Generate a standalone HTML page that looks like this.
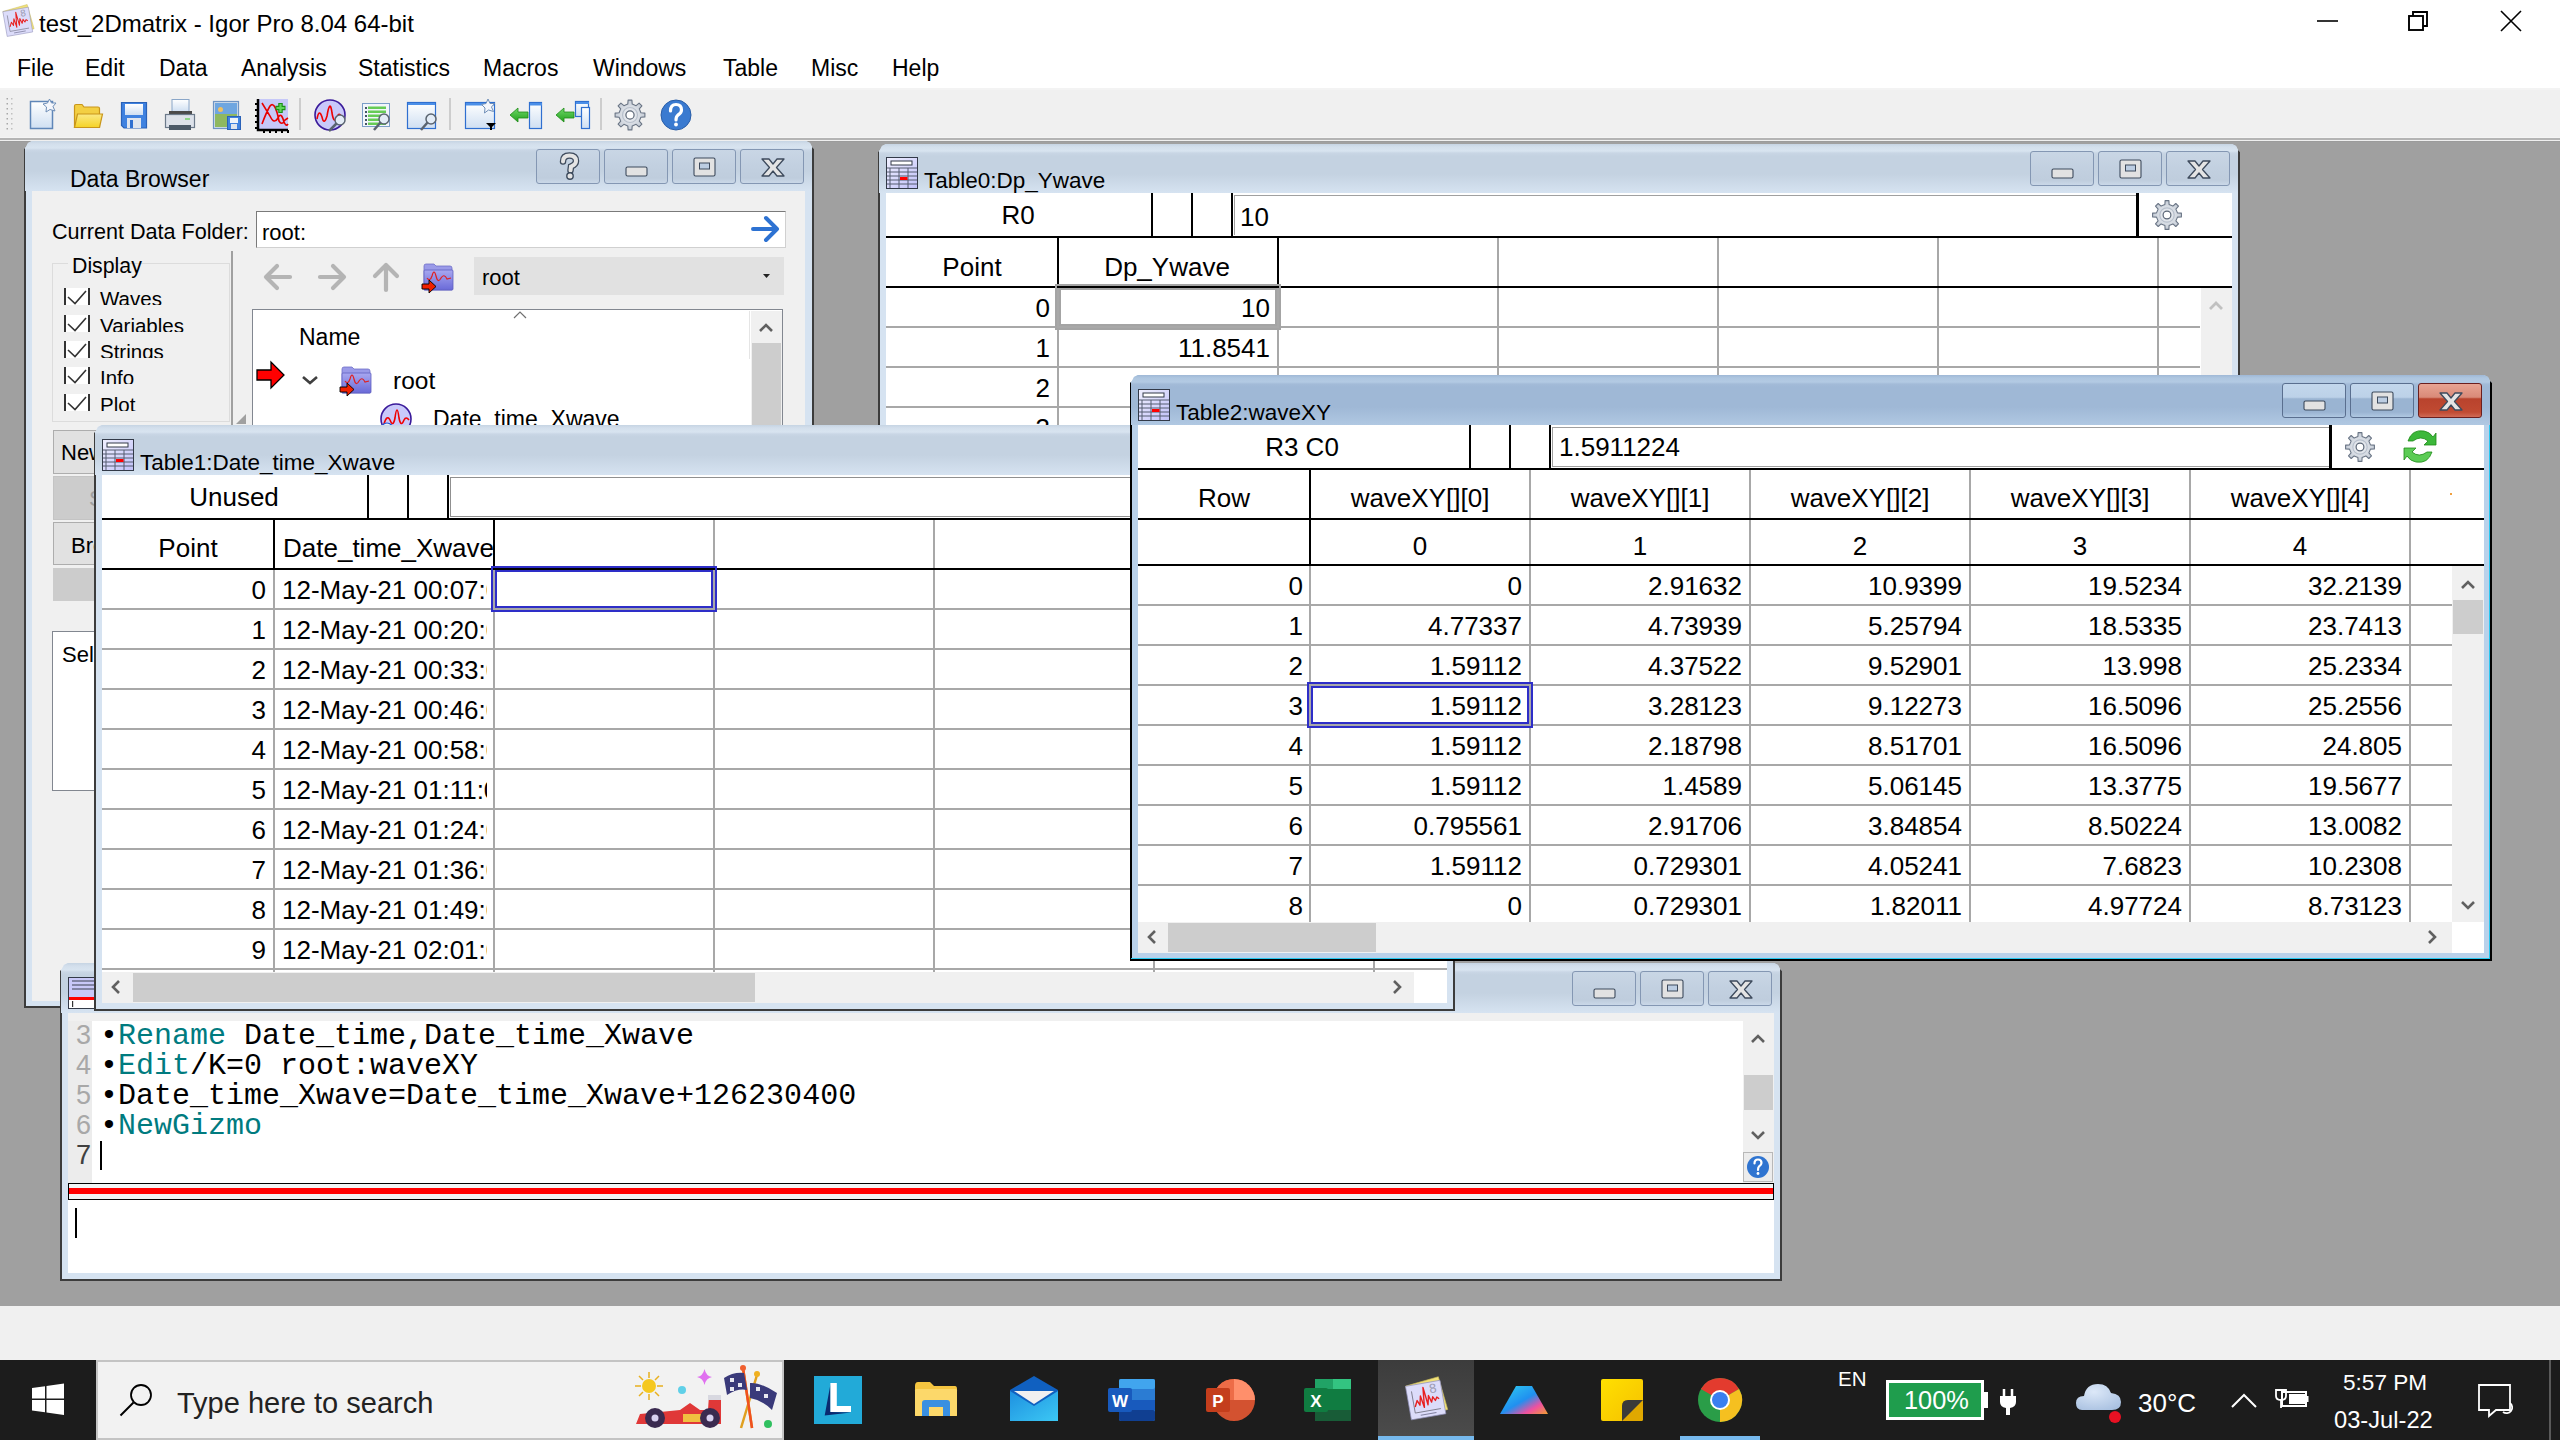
<!DOCTYPE html><html><head><meta charset="utf-8"><title>Igor Pro</title><style>
*{margin:0;padding:0;box-sizing:border-box}
html,body{width:2560px;height:1440px;overflow:hidden;background:#a0a0a0;font-family:"Liberation Sans",sans-serif;color:#000}
div,span,svg{position:absolute}
svg{overflow:visible}
.t{white-space:nowrap;line-height:1}
</style></head><body>
<div style="left:0px;top:0px;width:2560px;height:88px;background:#fff"></div>
<div style="left:0px;top:88px;width:2560px;height:2px;background:#f3f3f3"></div>
<div style="left:0px;top:90px;width:2560px;height:48px;background:#f0f0f0"></div>
<div style="left:0px;top:138px;width:2560px;height:2px;background:#b4b4b4"></div>
<div style="left:0px;top:137px;width:2560px;height:1px;background:#f4f4f4"></div>
<div style="left:0px;top:140px;width:2560px;height:1px;background:#efefef"></div>
<div style="left:0px;top:141px;width:2560px;height:1px;background:#9b9b9b"></div>
<div style="left:0px;top:1306px;width:2560px;height:54px;background:#f0f0f0"></div>
<div style="left:0px;top:1360px;width:2560px;height:80px;background:#1c1c1c"></div>
<span class="t" style="left:39px;top:12px;font-size:24px">test_2Dmatrix - Igor Pro 8.04 64-bit</span>
<span class="t" style="left:17px;top:57px;font-size:23px">File</span>
<span class="t" style="left:85px;top:57px;font-size:23px">Edit</span>
<span class="t" style="left:159px;top:57px;font-size:23px">Data</span>
<span class="t" style="left:241px;top:57px;font-size:23px">Analysis</span>
<span class="t" style="left:358px;top:57px;font-size:23px">Statistics</span>
<span class="t" style="left:483px;top:57px;font-size:23px">Macros</span>
<span class="t" style="left:593px;top:57px;font-size:23px">Windows</span>
<span class="t" style="left:723px;top:57px;font-size:23px">Table</span>
<span class="t" style="left:811px;top:57px;font-size:23px">Misc</span>
<span class="t" style="left:892px;top:57px;font-size:23px">Help</span>
<svg style="left:0;top:0" width="720" height="140" viewBox="0 0 720 140"><rect x="6.5" y="98" width="1.5" height="1.5" fill="#a8a8a8"/><rect x="11" y="98" width="1.5" height="1.5" fill="#c0c0c0"/><rect x="6.5" y="103" width="1.5" height="1.5" fill="#a8a8a8"/><rect x="11" y="103" width="1.5" height="1.5" fill="#c0c0c0"/><rect x="6.5" y="108" width="1.5" height="1.5" fill="#a8a8a8"/><rect x="11" y="108" width="1.5" height="1.5" fill="#c0c0c0"/><rect x="6.5" y="113" width="1.5" height="1.5" fill="#a8a8a8"/><rect x="11" y="113" width="1.5" height="1.5" fill="#c0c0c0"/><rect x="6.5" y="118" width="1.5" height="1.5" fill="#a8a8a8"/><rect x="11" y="118" width="1.5" height="1.5" fill="#c0c0c0"/><rect x="6.5" y="123" width="1.5" height="1.5" fill="#a8a8a8"/><rect x="11" y="123" width="1.5" height="1.5" fill="#c0c0c0"/><rect x="6.5" y="128" width="1.5" height="1.5" fill="#a8a8a8"/><rect x="11" y="128" width="1.5" height="1.5" fill="#c0c0c0"/><defs><linearGradient id="gw" x1="0" y1="0" x2="0" y2="1"><stop offset="0" stop-color="#ffffff"/><stop offset="1" stop-color="#cfdff2"/></linearGradient><linearGradient id="gy" x1="0" y1="0" x2="0" y2="1"><stop offset="0" stop-color="#fbe985"/><stop offset="1" stop-color="#f5d326"/></linearGradient><linearGradient id="gb" x1="0" y1="0" x2="0" y2="1"><stop offset="0" stop-color="#4b8fe8"/><stop offset="1" stop-color="#2f6fd0"/></linearGradient><linearGradient id="gg" x1="0" y1="0" x2="0" y2="1"><stop offset="0" stop-color="#6fd86a"/><stop offset="1" stop-color="#22a01c"/></linearGradient><radialGradient id="gear" cx="0.5" cy="0.5" r="0.5"><stop offset="0" stop-color="#f4f6f9"/><stop offset="1" stop-color="#c5ccd6"/></radialGradient></defs><rect x="30.5" y="101.5" width="22" height="27" fill="url(#gw)" stroke="#5f86b8" stroke-width="1.5"/><polygon points="49.5,99 51.5,103 56,103 53,106.5 55,111 50,109.5 46,112 46.5,107 43,104 47.5,103" fill="#f4f6fb" stroke="#6f8fb8" stroke-width="1"/><path d="M74.5,127.5 L74.5,106 Q74.5,104.5 76,104.5 L82,104.5 L84,107 L98,107 Q99.5,107 99.5,108.5 L99.5,127.5 Z" fill="#f3cf43" stroke="#c9961a" stroke-width="1.2"/><path d="M74.5,127.5 L77.5,114 L102.5,114 L99.5,127.5 Z" fill="url(#gy)" stroke="#c9961a" stroke-width="1.2"/><path d="M121.5,102.5 L146.5,102.5 L146.5,128 L124,128 L121.5,125.5 Z" fill="#3f82e0" stroke="#2a62b8" stroke-width="1.2"/><rect x="125" y="104" width="18" height="11" fill="url(#gw)"/><rect x="127" y="118" width="14" height="10" fill="#dfe5ee"/><rect x="130" y="120" width="3" height="8" fill="#2f6fd0"/><rect x="172" y="99.5" width="17" height="12" fill="url(#gw)" stroke="#8aa6c8" stroke-width="1"/><rect x="169" y="111" width="23" height="5" fill="#4a4a4a"/><rect x="165.5" y="114.5" width="29" height="13" fill="#dde2ea" stroke="#6c7a8a" stroke-width="1.2"/><rect x="185" y="118" width="5" height="2" fill="#8ed68a"/><rect x="169" y="125" width="22" height="5" fill="#4c5a68"/><rect x="213.5" y="101.5" width="25" height="27" fill="#cfdcec" stroke="#6f94c4" stroke-width="1.2"/><rect x="215" y="103" width="22" height="11" fill="#6fa6e0"/><rect x="215" y="114" width="22" height="13" fill="#8fb860"/><circle cx="220.5" cy="109.5" r="2.5" fill="#f0c060"/><rect x="227.5" y="116.5" width="13" height="13" fill="#3f82e0" stroke="#2a62b8" stroke-width="1"/><rect x="230" y="118" width="8" height="5" fill="#eef3fa"/><rect x="231" y="124" width="6" height="5" fill="#dfe5ee"/><rect x="258" y="99" width="30" height="30" fill="#c6c8f8"/><path d="M258,99 L258,130 L288,130" fill="none" stroke="#000" stroke-width="2.5"/><rect x="255" y="103" width="3" height="2" fill="#000"/><rect x="255" y="109" width="3" height="2" fill="#000"/><rect x="255" y="115" width="3" height="2" fill="#000"/><rect x="255" y="121" width="3" height="2" fill="#000"/><rect x="255" y="127" width="3" height="2" fill="#000"/><rect x="263" y="130" width="2" height="3" fill="#000"/><rect x="269" y="130" width="2" height="3" fill="#000"/><rect x="275" y="130" width="2" height="3" fill="#000"/><rect x="281" y="130" width="2" height="3" fill="#000"/><rect x="287" y="130" width="2" height="3" fill="#000"/><path d="M262,103 L270,116 Q274,125 278,118 Q281,111 284,122 Q286,127 288,124 M262,124 Q266,113 270,106 Q275,100 279,121 Q282,126 285,120 L288,118" fill="none" stroke="#e80000" stroke-width="1.6"/><path d="M280.5,103 L280.5,113 M275.5,108 L285.5,108" stroke="#1a8f16" stroke-width="4.5"/><path d="M280.5,104 L280.5,112 M276.5,108 L284.5,108" stroke="#5fd65a" stroke-width="2.2"/><rect x="299" y="98" width="2" height="32" fill="#cdcdcd"/><rect x="449" y="98" width="2" height="32" fill="#cdcdcd"/><rect x="600" y="98" width="2" height="32" fill="#cdcdcd"/><circle cx="330" cy="115" r="15" fill="#c9c9fa" stroke="#3a1a9a" stroke-width="1.6"/><path d="M317,119 Q319,108 322,117 Q324,126 327,116 Q330,98 332,113 Q334,125 337,117 Q339,112 341,116" fill="none" stroke="#f00000" stroke-width="1.6"/><circle cx="340" cy="120" r="5" fill="#e3ecf6" stroke="#5a6470" stroke-width="1.5"/><path d="M336.5,123.5 L329,131" stroke="#5a6470" stroke-width="2.5"/><rect x="362.5" y="103.5" width="27" height="23" fill="#f2f6fb" stroke="#7b9ec8" stroke-width="1"/><rect x="365" y="107" width="2" height="2" fill="#456"/><rect x="368" y="106.5" width="18" height="2.5" fill="#66cc55"/><rect x="365" y="111" width="2" height="2" fill="#456"/><rect x="368" y="110.5" width="18" height="2.5" fill="#66cc55"/><rect x="365" y="115" width="2" height="2" fill="#456"/><rect x="368" y="114.5" width="18" height="2.5" fill="#66cc55"/><rect x="365" y="119" width="2" height="2" fill="#456"/><rect x="368" y="118.5" width="18" height="2.5" fill="#66cc55"/><rect x="365" y="123" width="2" height="2" fill="#456"/><rect x="368" y="122.5" width="18" height="2.5" fill="#66cc55"/><circle cx="384" cy="119" r="5" fill="#e3ecf6" stroke="#5a6470" stroke-width="1.5"/><path d="M380.5,122.5 L374,130" stroke="#5a6470" stroke-width="2.5"/><rect x="407.5" y="102.5" width="28" height="26" fill="url(#gw)" stroke="#2f6fd0" stroke-width="1.2"/><rect x="408" y="103" width="27" height="2" fill="#4b8fe8"/><circle cx="431" cy="119" r="5" fill="#e3ecf6" stroke="#5a6470" stroke-width="1.5"/><path d="M427.5,122.5 L421,130" stroke="#5a6470" stroke-width="2.5"/><rect x="465.5" y="102.5" width="29" height="26" fill="url(#gw)" stroke="#2f6fd0" stroke-width="1.2"/><rect x="466" y="103" width="28" height="2.5" fill="#4b8fe8"/><polygon points="488,99 490,103.5 494.5,103.5 491.5,107 493.5,111.5 488.5,110 484.5,113 485,108 481.5,104.5 486,103.5" fill="#f4f6fb" stroke="#6f8fb8" stroke-width="1"/><path d="M486,123 L496,123 L491,128 Z" fill="#000"/><rect x="490" y="126" width="2" height="4" fill="#000"/><path d="M510,115 L518,108 L518,112 L528,112 L528,118 L518,118 L518,122 Z" fill="url(#gg)" stroke="#1e8a18" stroke-width="0.8"/><rect x="529.5" y="102.5" width="12" height="26" fill="url(#gw)" stroke="#2f6fd0" stroke-width="1.2"/><rect x="530" y="103" width="12" height="2.5" fill="#4b8fe8"/><path d="M556,115 L564,108 L564,112 L574,112 L574,118 L564,118 L564,122 Z" fill="url(#gg)" stroke="#1e8a18" stroke-width="0.8"/><rect x="575.5" y="101.5" width="13" height="15" fill="url(#gw)" stroke="#2f6fd0" stroke-width="1.2"/><rect x="576" y="102" width="13" height="2" fill="#4b8fe8"/><rect x="581.5" y="107.5" width="8" height="21" fill="url(#gw)" stroke="#2f6fd0" stroke-width="1.2"/><path d="M640.9,112.8 L644.9,113.1 L644.9,116.9 L640.9,117.2 L639.3,121.1 L641.9,124.1 L639.1,126.9 L636.1,124.3 L632.2,125.9 L631.9,129.9 L628.1,129.9 L627.8,125.9 L623.9,124.3 L620.9,126.9 L618.1,124.1 L620.7,121.1 L619.1,117.2 L615.1,116.9 L615.1,113.1 L619.1,112.8 L620.7,108.9 L618.1,105.9 L620.9,103.1 L623.9,105.7 L627.8,104.1 L628.1,100.1 L631.9,100.1 L632.2,104.1 L636.1,105.7 L639.1,103.1 L641.9,105.9 L639.3,108.9 Z" fill="url(#gear)" stroke="#6a7585" stroke-width="1.1" stroke-linejoin="round"/><circle cx="630" cy="115" r="7.5" fill="none" stroke="#b8c0cc" stroke-width="1.2"/><circle cx="630" cy="115" r="4.1" fill="#fff" stroke="#5a6575" stroke-width="1.2"/><circle cx="676" cy="115" r="15" fill="#3a7ad0" stroke="#2a5ea8" stroke-width="1"/><path d="M670.5,111 Q670.5,104.5 676,104.5 Q681.5,104.5 681.5,110 Q681.5,113 678,115 Q676,116.5 676,120" fill="none" stroke="#fff" stroke-width="3.2" stroke-linecap="round"/><circle cx="676" cy="124.5" r="1.9" fill="#fff"/></svg>
<svg style="left:0;top:0" width="40" height="40"><g transform="translate(18,21) scale(0.74) rotate(-10)"><rect x="-16" y="-18" width="34" height="34" fill="#f2e27a" stroke="#c8b858" stroke-width="0.6" transform="rotate(-6)"/><rect x="-18" y="-16" width="35" height="34" fill="#dcdcfa" stroke="#9090b8" stroke-width="0.7"/><path d="M-13,-10 V12 H13" fill="none" stroke="#707080" stroke-width="0.8"/><path d="M-12,6 L-9,0 L-7,5 L-5,-4 L-3,8 L-1,-12 L1,6 L3,-3 L5,4 L7,-1 L9,3 L11,0 L13,2" fill="none" stroke="#e82020" stroke-width="1.4" stroke-linejoin="round"/><text x="5" y="-5" font-size="13" fill="#9a9ab0" font-family="Liberation Sans">8</text><path d="M-8,15 H8" stroke="#8080a0" stroke-width="1"/></g></svg>
<svg style="left:0;top:0" width="2560" height="44"><path d="M2317,21 H2338" stroke="#000" stroke-width="1.6"/><rect x="2409" y="16" width="14" height="14" fill="none" stroke="#000" stroke-width="1.9"/><path d="M2413,16 V12 H2427 V26 H2423" fill="none" stroke="#000" stroke-width="1.9"/><path d="M2501,11 L2521,31 M2521,11 L2501,31" stroke="#000" stroke-width="1.6"/></svg>
<div style="left:24px;top:141px;width:790px;height:867px;background:#d6e3f1;border-left:1px solid #3c3c3c;border-right:2px solid #3c3c3c;border-bottom:2px solid #3c3c3c;clip-path:polygon(8px 0,calc(100% - 8px) 0,calc(100% - 4px) 2px,calc(100% - 2px) 6px,100% 8px,100% 100%,0 100%,0 8px,2px 6px,4px 2px);overflow:hidden"><div style="left:0;top:0;right:0;height:50px;background:linear-gradient(to bottom,#c6d4e3 0px,#d3dfec 3px,#d8e4f0 7px,#c9d6e5 9px,#c4d2e1 12px,#c4d2e1 30px,#d6e3f1 100%)"></div><div style="left:0;top:50px;width:1px;bottom:0;background:#3c3c3c"></div></div><span class="t" style="left:70px;top:168px;font-size:23px;">Data Browser</span><div style="left:536px;top:149px;width:64px;height:35px;background:linear-gradient(to bottom,#c9d6e5 0%,#c2d0e0 50%,#bfcddd 85%,#cad8e8 100%);border:1px solid #8497b3;border-radius:3px"><svg style="left:0;top:0" width="64" height="35"><path d="M26.0,11.5 Q26.0,5.5 32.5,5.5 Q39.0,5.5 39.0,11.0 Q39.0,14.5 34.0,16.5 L33.5,20.5" fill="none" stroke="#3d4a5c" stroke-width="6.5" stroke-linecap="round"/><path d="M26.0,11.5 Q26.0,5.5 32.5,5.5 Q39.0,5.5 39.0,11.0 Q39.0,14.5 34.0,16.5 L33.5,20.5" fill="none" stroke="#e4e4e4" stroke-width="4" stroke-linecap="round"/><circle cx="33.0" cy="26.0" r="3.2" fill="#e4e4e4" stroke="#3d4a5c" stroke-width="1.4"/></svg></div><div style="left:604px;top:149px;width:64px;height:35px;background:linear-gradient(to bottom,#c9d6e5 0%,#c2d0e0 50%,#bfcddd 85%,#cad8e8 100%);border:1px solid #8497b3;border-radius:3px"><svg style="left:0;top:0" width="64" height="35"><rect x="21.0" y="17.0" width="21" height="9" rx="1.5" fill="#e2e2e2" stroke="#3d4a5c" stroke-width="1.1"/></svg></div><div style="left:672px;top:149px;width:64px;height:35px;background:linear-gradient(to bottom,#c9d6e5 0%,#c2d0e0 50%,#bfcddd 85%,#cad8e8 100%);border:1px solid #8497b3;border-radius:3px"><svg style="left:0;top:0" width="64" height="35"><rect x="21.0" y="8.0" width="21" height="18" rx="1.5" fill="#e2e2e2" stroke="#3d4a5c" stroke-width="1.1"/><rect x="26.5" y="13.0" width="10" height="6" fill="#bccde2" stroke="#3d4a5c" stroke-width="1"/></svg></div><div style="left:740px;top:149px;width:64px;height:35px;background:linear-gradient(to bottom,#c9d6e5 0%,#c2d0e0 50%,#bfcddd 85%,#cad8e8 100%);border:1px solid #8497b3;border-radius:3px"><svg style="left:0;top:0" width="64" height="35"><path d="M21.0,9.0 L28.0,9.0 L32.0,14.0 L36.0,9.0 L43.0,9.0 L35.5,17.5 L43.0,26.0 L36.0,26.0 L32.0,21.0 L28.0,26.0 L21.0,26.0 L28.5,17.5 Z" fill="#e4e4e4" stroke="#3d4a5c" stroke-width="1.3" stroke-linejoin="round"/></svg></div><div style="left:32px;top:191px;width:773px;height:810px;overflow:hidden;background:#f0f0f0"><div style="left:-32px;top:-191px;width:2560px;height:1440px"><div style="left:32px;top:191px;width:773px;height:810px;background:#f0f0f0"></div><span class="t" style="left:52px;top:221px;font-size:21.6px;">Current Data Folder:</span><div style="left:256px;top:211px;width:530px;height:37px;background:#fff;border:1px solid #7a7a7a;border-right-color:#d0d0d0;border-bottom-color:#d0d0d0"></div><span class="t" style="left:262px;top:222px;font-size:22px;">root:</span><svg style="left:0;top:0" width="2560" height="1440"><path d="M753,229 H777 M766,218 L777,229 L766,240" fill="none" stroke="#2d72d2" stroke-width="4" stroke-linecap="round" stroke-linejoin="round"/></svg><div style="left:52px;top:263px;width:178px;height:159px;border:1px solid #dcdcdc"></div><div style="left:68px;top:256px;width:44px;height:16px;background:#f0f0f0"></div><span class="t" style="left:72px;top:256px;font-size:21.3px;">Display</span><div style="left:0;top:288px;width:230px;height:17px;overflow:hidden"><div style="left:66px;top:0;width:22px;height:40px;background:#fff"></div><div style="left:64px;top:0;width:2px;height:40px;background:#333"></div><div style="left:88px;top:0;width:2px;height:40px;background:#333"></div><svg style="left:0;top:0" width="230" height="40"><path d="M68,9 L75,15.5 L86,3" fill="none" stroke="#333" stroke-width="1.6"/></svg><span class="t" style="left:100px;top:1.0px;font-size:20.5px">Waves</span></div><div style="left:0;top:315px;width:230px;height:17px;overflow:hidden"><div style="left:66px;top:0;width:22px;height:40px;background:#fff"></div><div style="left:64px;top:0;width:2px;height:40px;background:#333"></div><div style="left:88px;top:0;width:2px;height:40px;background:#333"></div><svg style="left:0;top:0" width="230" height="40"><path d="M68,9 L75,15.5 L86,3" fill="none" stroke="#333" stroke-width="1.6"/></svg><span class="t" style="left:100px;top:1.0px;font-size:20.5px">Variables</span></div><div style="left:0;top:341px;width:230px;height:17px;overflow:hidden"><div style="left:66px;top:0;width:22px;height:40px;background:#fff"></div><div style="left:64px;top:0;width:2px;height:40px;background:#333"></div><div style="left:88px;top:0;width:2px;height:40px;background:#333"></div><svg style="left:0;top:0" width="230" height="40"><path d="M68,9 L75,15.5 L86,3" fill="none" stroke="#333" stroke-width="1.6"/></svg><span class="t" style="left:100px;top:1.0px;font-size:20.5px">Strings</span></div><div style="left:0;top:367px;width:230px;height:17px;overflow:hidden"><div style="left:66px;top:0;width:22px;height:40px;background:#fff"></div><div style="left:64px;top:0;width:2px;height:40px;background:#333"></div><div style="left:88px;top:0;width:2px;height:40px;background:#333"></div><svg style="left:0;top:0" width="230" height="40"><path d="M68,9 L75,15.5 L86,3" fill="none" stroke="#333" stroke-width="1.6"/></svg><span class="t" style="left:100px;top:1.0px;font-size:20.5px">Info</span></div><div style="left:0;top:394px;width:230px;height:17px;overflow:hidden"><div style="left:66px;top:0;width:22px;height:40px;background:#fff"></div><div style="left:64px;top:0;width:2px;height:40px;background:#333"></div><div style="left:88px;top:0;width:2px;height:40px;background:#333"></div><svg style="left:0;top:0" width="230" height="40"><path d="M68,9 L75,15.5 L86,3" fill="none" stroke="#333" stroke-width="1.6"/></svg><span class="t" style="left:100px;top:1.0px;font-size:20.5px">Plot</span></div><div style="left:231px;top:251px;width:2px;height:181px;background:#a0a0a0"></div><svg style="left:0;top:0" width="2560" height="1440"><path d="M236,424 L246,414 L246,424 Z" fill="#a0a0a0"/></svg><svg style="left:0;top:0" width="2560" height="1440"><g fill="none" stroke="#b4b4b4" stroke-width="4.2" stroke-linecap="round" stroke-linejoin="round"><path d="M266,277 H290 M277,266 L266,277 L277,288"/><path d="M320,277 H344 M333,266 L344,277 L333,288"/><path d="M386,265 V290 M375,276 L386,265 L397,276"/></g></svg><svg style="left:422px;top:262px" width="34" height="32" viewBox="0 0 34 32"><defs><linearGradient id="fp" x1="0" y1="0" x2="0" y2="1"><stop offset="0" stop-color="#a8a8f0"/><stop offset="1" stop-color="#6a6ad8"/></linearGradient></defs><path d="M2,6 L2,4 Q2,2 4,2 L12,2 L14,4 L28,4 Q30,4 30,6 L30,28 L2,28 Z" fill="#9a9ae8" stroke="#7070c8" stroke-width="0.8"/><rect x="2" y="8" width="29" height="20" rx="1" fill="url(#fp)" stroke="#6060c0" stroke-width="0.8"/><path d="M5,16 Q8,20 10,14 Q12,6 14,14 Q16,22 19,16 Q22,11 25,17 L29,16" fill="none" stroke="#e02020" stroke-width="1.2"/><path d="M0,22 L7,22 L7,18 L14,24.5 L7,31 L7,27 L0,27 Z" fill="#f02000" stroke="#000" stroke-width="0.9"/></svg><div style="left:474px;top:257px;width:310px;height:38px;background:#e1e1e1"></div><span class="t" style="left:482px;top:267px;font-size:22px;">root</span><svg style="left:0;top:0" width="2560" height="1440"><path d="M763,274 H770 L766.5,278 Z" fill="#222"/></svg><div style="left:252px;top:309px;width:531px;height:140px;background:#fff;border:1px solid #828790"></div><div style="left:751px;top:311px;width:31px;height:138px;background:#f0f0f0"></div><div style="left:752px;top:343px;width:29px;height:106px;background:#cdcdcd"></div><div style="left:749px;top:311px;width:1px;height:48px;background:#e5e5e5"></div><svg style="left:0;top:0" width="2560" height="1440"><path d="M760,331.0 L766,325.0 L772,331.0" fill="none" stroke="#606060" stroke-width="2.6"/><path d="M514,318.0 L520,312.0 L526,318.0" fill="none" stroke="#707070" stroke-width="1.2"/></svg><span class="t" style="left:299px;top:326px;font-size:23px;">Name</span><svg style="left:0;top:0" width="2560" height="1440"><path d="M257,370 L271,370 L271,362 L284,375 L271,388 L271,380 L257,380 Z" fill="#f00" stroke="#000" stroke-width="1.3"/><path d="M303,377 L310,383 L317,377" fill="none" stroke="#404040" stroke-width="2.6"/></svg><svg style="left:340px;top:365px" width="34" height="32" viewBox="0 0 34 32"><defs><linearGradient id="fp" x1="0" y1="0" x2="0" y2="1"><stop offset="0" stop-color="#a8a8f0"/><stop offset="1" stop-color="#6a6ad8"/></linearGradient></defs><path d="M2,6 L2,4 Q2,2 4,2 L12,2 L14,4 L28,4 Q30,4 30,6 L30,28 L2,28 Z" fill="#9a9ae8" stroke="#7070c8" stroke-width="0.8"/><rect x="2" y="8" width="29" height="20" rx="1" fill="url(#fp)" stroke="#6060c0" stroke-width="0.8"/><path d="M5,16 Q8,20 10,14 Q12,6 14,14 Q16,22 19,16 Q22,11 25,17 L29,16" fill="none" stroke="#e02020" stroke-width="1.2"/><path d="M0,22 L7,22 L7,18 L14,24.5 L7,31 L7,27 L0,27 Z" fill="#f02000" stroke="#000" stroke-width="0.9"/></svg><span class="t" style="left:393px;top:369px;font-size:24.5px;">root</span><svg style="left:0;top:0" width="2560" height="1440"><circle cx="396" cy="419" r="15" fill="#c9c9fa" stroke="#3a1a9a" stroke-width="1.6"/><path d="M384,424 Q387,414 390,420 Q393,428 395,418 Q397,402 399,418 Q401,428 404,420 Q406,416 409,420" fill="none" stroke="#f00000" stroke-width="1.6"/><circle cx="387" cy="429" r="6" fill="#eee" stroke="#2050d0" stroke-width="1.2"/></svg><span class="t" style="left:433px;top:408px;font-size:23px;">Date_time_Xwave</span><div style="left:53px;top:430px;width:120px;height:44px;background:#e1e1e1;border:1px solid #adadad"></div><span class="t" style="left:61px;top:442px;font-size:22px;">New Data Folder</span><div style="left:53px;top:476px;width:120px;height:44px;background:#cccccc;border:1px solid #c4c4c4"></div><span class="t" style="left:89px;top:488px;font-size:22px;color:#a0a0a0">Save Copy</span><div style="left:53px;top:522px;width:120px;height:43px;background:#e1e1e1;border:1px solid #adadad"></div><span class="t" style="left:71px;top:534.5px;font-size:22px;">Browse Expt</span><div style="left:53px;top:568px;width:120px;height:33px;background:#cccccc"></div><div style="left:52px;top:631px;width:200px;height:160px;background:#fff;border:1px solid #828790"></div><span class="t" style="left:62px;top:644px;font-size:22px;">Select a wave</span></div></div>
<div style="left:878px;top:144px;width:1362px;height:756px;background:#d6e3f1;border-left:1px solid #3c3c3c;border-right:2px solid #3c3c3c;border-bottom:2px solid #3c3c3c;clip-path:polygon(8px 0,calc(100% - 8px) 0,calc(100% - 4px) 2px,calc(100% - 2px) 6px,100% 8px,100% 100%,0 100%,0 8px,2px 6px,4px 2px);overflow:hidden"><div style="left:0;top:0;right:0;height:49px;background:linear-gradient(to bottom,#c6d4e3 0px,#d3dfec 3px,#d8e4f0 7px,#c9d6e5 9px,#c4d2e1 12px,#c4d2e1 30px,#d6e3f1 100%)"></div><div style="left:0;top:49px;width:1px;bottom:0;background:#3c3c3c"></div></div><svg style="left:886px;top:157px" width="33" height="33" viewBox="0 0 33 33"><defs><linearGradient id="ti" x1="0" y1="0" x2="1" y2="1"><stop offset="0" stop-color="#f0f0ff"/><stop offset="1" stop-color="#c0c0f8"/></linearGradient></defs><rect x="0.5" y="0.5" width="31" height="31" fill="url(#ti)" stroke="#333a48" stroke-width="1"/><rect x="5" y="4" width="21" height="4" fill="#fff" stroke="#333a48" stroke-width="1"/><path d="M1,11 H31 M1,15 H31 M1,19 H31 M1,23 H31 M1,27 H31 M4,11 V31 M13,11 V31 M22,11 V31" stroke="#555c70" stroke-width="1"/><rect x="14" y="20" width="7.5" height="3" fill="#f00"/></svg><span class="t" style="left:924px;top:170px;font-size:22.5px">Table0:Dp_Ywave</span><div style="left:2030px;top:151px;width:64px;height:35px;background:linear-gradient(to bottom,#c9d6e5 0%,#c2d0e0 50%,#bfcddd 85%,#cad8e8 100%);border:1px solid #8497b3;border-radius:3px"><svg style="left:0;top:0" width="64" height="35"><rect x="21.0" y="17.0" width="21" height="9" rx="1.5" fill="#e2e2e2" stroke="#3d4a5c" stroke-width="1.1"/></svg></div><div style="left:2098px;top:151px;width:64px;height:35px;background:linear-gradient(to bottom,#c9d6e5 0%,#c2d0e0 50%,#bfcddd 85%,#cad8e8 100%);border:1px solid #8497b3;border-radius:3px"><svg style="left:0;top:0" width="64" height="35"><rect x="21.0" y="8.0" width="21" height="18" rx="1.5" fill="#e2e2e2" stroke="#3d4a5c" stroke-width="1.1"/><rect x="26.5" y="13.0" width="10" height="6" fill="#bccde2" stroke="#3d4a5c" stroke-width="1"/></svg></div><div style="left:2166px;top:151px;width:64px;height:35px;background:linear-gradient(to bottom,#c9d6e5 0%,#c2d0e0 50%,#bfcddd 85%,#cad8e8 100%);border:1px solid #8497b3;border-radius:3px"><svg style="left:0;top:0" width="64" height="35"><path d="M21.0,9.0 L28.0,9.0 L32.0,14.0 L36.0,9.0 L43.0,9.0 L35.5,17.5 L43.0,26.0 L36.0,26.0 L32.0,21.0 L28.0,26.0 L21.0,26.0 L28.5,17.5 Z" fill="#e4e4e4" stroke="#3d4a5c" stroke-width="1.3" stroke-linejoin="round"/></svg></div><div style="left:886px;top:193px;width:1346px;height:699px;overflow:hidden;background:#fff"><div style="left:-886px;top:-193px;width:2560px;height:1440px"><div style="left:886px;top:193px;width:1346px;height:699px;background:#fff"></div><span class="t" style="left:718px;width:600px;text-align:center;top:201.5px;font-size:26px;">R0</span><div style="left:1151px;top:193px;width:2px;height:44px;background:#000"></div><div style="left:1191px;top:193px;width:2px;height:44px;background:#000"></div><div style="left:1231px;top:193px;width:2px;height:44px;background:#000"></div><div style="left:1234px;top:195px;width:903px;height:40px;border:1px solid #a0a0a0;border-right:none;border-bottom:none"></div><span class="t" style="left:1240px;top:203.5px;font-size:26px;">10</span><div style="left:2136px;top:193px;width:3px;height:44px;background:#000"></div><svg style="left:0;top:0" width="2560" height="1440"><path d="M2177.5,212.9 L2181.4,213.1 L2181.4,216.9 L2177.5,217.1 L2175.9,220.9 L2178.5,223.8 L2175.8,226.5 L2172.9,223.9 L2169.1,225.5 L2168.9,229.4 L2165.1,229.4 L2164.9,225.5 L2161.1,223.9 L2158.2,226.5 L2155.5,223.8 L2158.1,220.9 L2156.5,217.1 L2152.6,216.9 L2152.6,213.1 L2156.5,212.9 L2158.1,209.1 L2155.5,206.2 L2158.2,203.5 L2161.1,206.1 L2164.9,204.5 L2165.1,200.6 L2168.9,200.6 L2169.1,204.5 L2172.9,206.1 L2175.8,203.5 L2178.5,206.2 L2175.9,209.1 Z" fill="url(#gear)" stroke="#6a7585" stroke-width="1.1" stroke-linejoin="round"/><circle cx="2167" cy="215" r="7.2" fill="none" stroke="#b8c0cc" stroke-width="1.2"/><circle cx="2167" cy="215" r="3.9" fill="#fff" stroke="#5a6575" stroke-width="1.2"/></svg><div style="left:886px;top:236px;width:1346px;height:2px;background:#000"></div><span class="t" style="left:672px;width:600px;text-align:center;top:254px;font-size:26px;">Point</span><span class="t" style="left:867px;width:600px;text-align:center;top:254px;font-size:26px;">Dp_Ywave</span><div style="left:1057px;top:238px;width:2px;height:50px;background:#000"></div><div style="left:1277px;top:238px;width:2px;height:50px;background:#000"></div><div style="left:1497px;top:238px;width:2px;height:654px;background:#a8a8a8"></div><div style="left:1717px;top:238px;width:2px;height:654px;background:#a8a8a8"></div><div style="left:1937px;top:238px;width:2px;height:654px;background:#a8a8a8"></div><div style="left:2157px;top:238px;width:2px;height:654px;background:#a8a8a8"></div><div style="left:886px;top:286px;width:1346px;height:2px;background:#000"></div><div style="left:886px;top:326px;width:1314px;height:2px;background:#a8a8a8"></div><span class="t" style="right:1510px;top:295px;font-size:26px;">0</span><span class="t" style="right:1290px;top:295px;font-size:26px;">10</span><div style="left:886px;top:366px;width:1314px;height:2px;background:#a8a8a8"></div><span class="t" style="right:1510px;top:335px;font-size:26px;">1</span><span class="t" style="right:1290px;top:335px;font-size:26px;">11.8541</span><div style="left:886px;top:406px;width:1314px;height:2px;background:#a8a8a8"></div><span class="t" style="right:1510px;top:375px;font-size:26px;">2</span><div style="left:886px;top:446px;width:1314px;height:2px;background:#a8a8a8"></div><span class="t" style="right:1510px;top:415px;font-size:26px;">3</span><div style="left:886px;top:486px;width:1314px;height:2px;background:#a8a8a8"></div><span class="t" style="right:1510px;top:455px;font-size:26px;">4</span><div style="left:886px;top:526px;width:1314px;height:2px;background:#a8a8a8"></div><span class="t" style="right:1510px;top:495px;font-size:26px;">5</span><div style="left:886px;top:566px;width:1314px;height:2px;background:#a8a8a8"></div><span class="t" style="right:1510px;top:535px;font-size:26px;">6</span><div style="left:886px;top:606px;width:1314px;height:2px;background:#a8a8a8"></div><span class="t" style="right:1510px;top:575px;font-size:26px;">7</span><div style="left:886px;top:646px;width:1314px;height:2px;background:#a8a8a8"></div><span class="t" style="right:1510px;top:615px;font-size:26px;">8</span><div style="left:886px;top:686px;width:1314px;height:2px;background:#a8a8a8"></div><span class="t" style="right:1510px;top:655px;font-size:26px;">9</span><div style="left:886px;top:726px;width:1314px;height:2px;background:#a8a8a8"></div><span class="t" style="right:1510px;top:695px;font-size:26px;">10</span><div style="left:886px;top:766px;width:1314px;height:2px;background:#a8a8a8"></div><span class="t" style="right:1510px;top:735px;font-size:26px;">11</span><div style="left:886px;top:806px;width:1314px;height:2px;background:#a8a8a8"></div><span class="t" style="right:1510px;top:775px;font-size:26px;">12</span><div style="left:886px;top:846px;width:1314px;height:2px;background:#a8a8a8"></div><span class="t" style="right:1510px;top:815px;font-size:26px;">13</span><div style="left:886px;top:886px;width:1314px;height:2px;background:#a8a8a8"></div><span class="t" style="right:1510px;top:855px;font-size:26px;">14</span><div style="left:1057px;top:288px;width:2px;height:604px;background:#a8a8a8"></div><div style="left:1277px;top:288px;width:2px;height:604px;background:#a8a8a8"></div><div style="left:1055px;top:284px;width:226px;height:46px;border:2px solid #a4a4a4"></div><div style="left:1059px;top:288px;width:218px;height:38px;border:2px solid #a4a4a4"></div><div style="left:2201px;top:288px;width:31px;height:604px;background:#f0f0f0"></div><svg style="left:0;top:0" width="2560" height="1440"><path d="M2210,309.0 L2216,303.0 L2222,309.0" fill="none" stroke="#c0c0c0" stroke-width="2.8"/></svg></div></div>
<div style="left:60px;top:963px;width:1722px;height:318px;background:#d6e3f1;border-left:1px solid #3c3c3c;border-right:2px solid #3c3c3c;border-bottom:2px solid #3c3c3c;clip-path:polygon(8px 0,calc(100% - 8px) 0,calc(100% - 4px) 2px,calc(100% - 2px) 6px,100% 8px,100% 100%,0 100%,0 8px,2px 6px,4px 2px);overflow:hidden"><div style="left:0;top:0;right:0;height:50px;background:linear-gradient(to bottom,#c6d4e3 0px,#d3dfec 3px,#d8e4f0 7px,#c9d6e5 9px,#c4d2e1 12px,#c4d2e1 30px,#d6e3f1 100%)"></div><div style="left:0;top:50px;width:1px;bottom:0;background:#3c3c3c"></div></div><svg style="left:68px;top:977px" width="33" height="33" viewBox="0 0 33 33"><rect x="0.5" y="0.5" width="31" height="31" fill="#c8c8f8" stroke="#333a48"/><path d="M4,4 H28 M4,8 H28 M4,12 H28" stroke="#3a4050" stroke-width="1.2"/><rect x="1" y="20" width="30" height="3" fill="#f00"/><rect x="1" y="23" width="30" height="8" fill="#fff"/><rect x="4" y="24" width="1.2" height="6" fill="#333"/></svg><div style="left:1572px;top:971px;width:64px;height:35px;background:linear-gradient(to bottom,#c9d6e5 0%,#c2d0e0 50%,#bfcddd 85%,#cad8e8 100%);border:1px solid #8497b3;border-radius:3px"><svg style="left:0;top:0" width="64" height="35"><rect x="21.0" y="17.0" width="21" height="9" rx="1.5" fill="#e2e2e2" stroke="#3d4a5c" stroke-width="1.1"/></svg></div><div style="left:1640px;top:971px;width:64px;height:35px;background:linear-gradient(to bottom,#c9d6e5 0%,#c2d0e0 50%,#bfcddd 85%,#cad8e8 100%);border:1px solid #8497b3;border-radius:3px"><svg style="left:0;top:0" width="64" height="35"><rect x="21.0" y="8.0" width="21" height="18" rx="1.5" fill="#e2e2e2" stroke="#3d4a5c" stroke-width="1.1"/><rect x="26.5" y="13.0" width="10" height="6" fill="#bccde2" stroke="#3d4a5c" stroke-width="1"/></svg></div><div style="left:1708px;top:971px;width:64px;height:35px;background:linear-gradient(to bottom,#c9d6e5 0%,#c2d0e0 50%,#bfcddd 85%,#cad8e8 100%);border:1px solid #8497b3;border-radius:3px"><svg style="left:0;top:0" width="64" height="35"><path d="M21.0,9.0 L28.0,9.0 L32.0,14.0 L36.0,9.0 L43.0,9.0 L35.5,17.5 L43.0,26.0 L36.0,26.0 L32.0,21.0 L28.0,26.0 L21.0,26.0 L28.5,17.5 Z" fill="#e4e4e4" stroke="#3d4a5c" stroke-width="1.3" stroke-linejoin="round"/></svg></div><div style="left:68px;top:1013px;width:1706px;height:260px;overflow:hidden;background:#f0f0f0"><div style="left:-68px;top:-1013px;width:2560px;height:1440px"><div style="left:68px;top:1013px;width:1706px;height:260px;background:#f0f0f0"></div><div style="left:68px;top:1021px;width:1675px;height:162px;background:#fff"></div><div style="left:68px;top:1021px;width:24px;height:162px;background:#ececec"></div><span class="t" style="right:2469px;top:1022.4px;font-size:27px;color:#a8a8a8">3</span><span class="t" style="left:100px;top:1021.0px;font-family:'Liberation Mono',monospace;font-size:30px"><span style="position:static;color:#000">•</span><span style="position:static;color:#007b7f">Rename</span><span style="position:static;color:#000"> Date_time,Date_time_Xwave</span></span><span class="t" style="right:2469px;top:1052.4px;font-size:27px;color:#a8a8a8">4</span><span class="t" style="left:100px;top:1051.0px;font-family:'Liberation Mono',monospace;font-size:30px"><span style="position:static;color:#000">•</span><span style="position:static;color:#007b7f">Edit</span><span style="position:static;color:#000">/K=0 root:waveXY</span></span><span class="t" style="right:2469px;top:1082.4px;font-size:27px;color:#a8a8a8">5</span><span class="t" style="left:100px;top:1081.0px;font-family:'Liberation Mono',monospace;font-size:30px"><span style="position:static;color:#000">•</span><span style="position:static;color:#000">Date_time_Xwave=Date_time_Xwave+126230400</span></span><span class="t" style="right:2469px;top:1112.4px;font-size:27px;color:#a8a8a8">6</span><span class="t" style="left:100px;top:1111.0px;font-family:'Liberation Mono',monospace;font-size:30px"><span style="position:static;color:#000">•</span><span style="position:static;color:#007b7f">NewGizmo</span></span><span class="t" style="right:2469px;top:1142.4px;font-size:27px;color:#404040">7</span><div style="left:100px;top:1141px;width:2px;height:29px;background:#000"></div><div style="left:1743px;top:1021px;width:31px;height:162px;background:#f0f0f0"></div><div style="left:1744px;top:1075px;width:29px;height:35px;background:#cdcdcd"></div><svg style="left:0;top:0" width="2560" height="1440"><path d="M1752,1042.0 L1758,1036.0 L1764,1042.0" fill="none" stroke="#606060" stroke-width="2.6"/><path d="M1752,1132.0 L1758,1138.0 L1764,1132.0" fill="none" stroke="#606060" stroke-width="2.6"/><rect x="1743.5" y="1152.5" width="29" height="29" fill="#ececec" stroke="#b8b8b8" stroke-width="1"/><circle cx="1758" cy="1167" r="11" fill="#2f74d0"/><path d="M1754.5,1163.5 Q1754.5,1159.5 1758,1159.5 Q1761.5,1159.5 1761.5,1163 Q1761.5,1165 1759,1166.5 Q1758,1167.5 1758,1170" fill="none" stroke="#fff" stroke-width="2.2" stroke-linecap="round"/><circle cx="1758" cy="1173.5" r="1.4" fill="#fff"/></svg><div style="left:68px;top:1183px;width:1706px;height:17px;background:#f0f4f4;border:1px solid #000"></div><div style="left:69px;top:1188px;width:1704px;height:6px;background:#ff0000"></div><div style="left:68px;top:1200px;width:1706px;height:73px;background:#fff"></div><div style="left:75px;top:1208px;width:2px;height:30px;background:#000"></div></div></div>
<div style="left:94px;top:425px;width:1361px;height:586px;background:#d6e3f1;border-left:1px solid #3c3c3c;border-right:2px solid #3c3c3c;border-bottom:2px solid #3c3c3c;clip-path:polygon(8px 0,calc(100% - 8px) 0,calc(100% - 4px) 2px,calc(100% - 2px) 6px,100% 8px,100% 100%,0 100%,0 8px,2px 6px,4px 2px);overflow:hidden"><div style="left:0;top:0;right:0;height:50px;background:linear-gradient(to bottom,#c6d4e3 0px,#d3dfec 3px,#d8e4f0 7px,#c9d6e5 9px,#c4d2e1 12px,#c4d2e1 30px,#d6e3f1 100%)"></div><div style="left:0;top:50px;width:1px;bottom:0;background:#3c3c3c"></div></div><svg style="left:102px;top:439px" width="33" height="33" viewBox="0 0 33 33"><defs><linearGradient id="ti" x1="0" y1="0" x2="1" y2="1"><stop offset="0" stop-color="#f0f0ff"/><stop offset="1" stop-color="#c0c0f8"/></linearGradient></defs><rect x="0.5" y="0.5" width="31" height="31" fill="url(#ti)" stroke="#333a48" stroke-width="1"/><rect x="5" y="4" width="21" height="4" fill="#fff" stroke="#333a48" stroke-width="1"/><path d="M1,11 H31 M1,15 H31 M1,19 H31 M1,23 H31 M1,27 H31 M4,11 V31 M13,11 V31 M22,11 V31" stroke="#555c70" stroke-width="1"/><rect x="14" y="20" width="7.5" height="3" fill="#f00"/></svg><span class="t" style="left:140px;top:452px;font-size:22.5px">Table1:Date_time_Xwave</span><div style="left:102px;top:475px;width:1345px;height:528px;overflow:hidden;background:#fff"><div style="left:-102px;top:-475px;width:2560px;height:1440px"><div style="left:102px;top:475px;width:1345px;height:528px;background:#fff"></div><span class="t" style="left:-66px;width:600px;text-align:center;top:483.5px;font-size:26px;">Unused</span><div style="left:367px;top:475px;width:2px;height:44px;background:#000"></div><div style="left:407px;top:475px;width:2px;height:44px;background:#000"></div><div style="left:447px;top:475px;width:2px;height:44px;background:#000"></div><div style="left:450px;top:477px;width:1000px;height:40px;border:1px solid #909090;border-right:none"></div><div style="left:102px;top:518px;width:1345px;height:2px;background:#000"></div><span class="t" style="left:-112px;width:600px;text-align:center;top:535px;font-size:26px;">Point</span><div style="left:275px;top:520px;width:218px;height:48px;overflow:hidden"><span class="t" style="left:8px;top:15px;font-size:26px;">Date_time_Xwave</span></div><div style="left:273px;top:520px;width:2px;height:50px;background:#000"></div><div style="left:493px;top:520px;width:2px;height:50px;background:#000"></div><div style="left:713px;top:520px;width:2px;height:452px;background:#a8a8a8"></div><div style="left:933px;top:520px;width:2px;height:452px;background:#a8a8a8"></div><div style="left:1153px;top:520px;width:2px;height:452px;background:#a8a8a8"></div><div style="left:1373px;top:520px;width:2px;height:452px;background:#a8a8a8"></div><div style="left:102px;top:568px;width:1345px;height:2px;background:#000"></div><div style="left:102px;top:608px;width:1345px;height:2px;background:#a8a8a8"></div><span class="t" style="right:2294px;top:577px;font-size:26px;">0</span><div style="left:275px;top:570px;width:212px;height:38px;overflow:hidden"><span class="t" style="left:7px;top:7px;font-size:26px;">12-May-21 00:07:00</span></div><div style="left:102px;top:648px;width:1345px;height:2px;background:#a8a8a8"></div><span class="t" style="right:2294px;top:617px;font-size:26px;">1</span><div style="left:275px;top:610px;width:212px;height:38px;overflow:hidden"><span class="t" style="left:7px;top:7px;font-size:26px;">12-May-21 00:20:00</span></div><div style="left:102px;top:688px;width:1345px;height:2px;background:#a8a8a8"></div><span class="t" style="right:2294px;top:657px;font-size:26px;">2</span><div style="left:275px;top:650px;width:212px;height:38px;overflow:hidden"><span class="t" style="left:7px;top:7px;font-size:26px;">12-May-21 00:33:00</span></div><div style="left:102px;top:728px;width:1345px;height:2px;background:#a8a8a8"></div><span class="t" style="right:2294px;top:697px;font-size:26px;">3</span><div style="left:275px;top:690px;width:212px;height:38px;overflow:hidden"><span class="t" style="left:7px;top:7px;font-size:26px;">12-May-21 00:46:00</span></div><div style="left:102px;top:768px;width:1345px;height:2px;background:#a8a8a8"></div><span class="t" style="right:2294px;top:737px;font-size:26px;">4</span><div style="left:275px;top:730px;width:212px;height:38px;overflow:hidden"><span class="t" style="left:7px;top:7px;font-size:26px;">12-May-21 00:58:00</span></div><div style="left:102px;top:808px;width:1345px;height:2px;background:#a8a8a8"></div><span class="t" style="right:2294px;top:777px;font-size:26px;">5</span><div style="left:275px;top:770px;width:212px;height:38px;overflow:hidden"><span class="t" style="left:7px;top:7px;font-size:26px;">12-May-21 01:11:00</span></div><div style="left:102px;top:848px;width:1345px;height:2px;background:#a8a8a8"></div><span class="t" style="right:2294px;top:817px;font-size:26px;">6</span><div style="left:275px;top:810px;width:212px;height:38px;overflow:hidden"><span class="t" style="left:7px;top:7px;font-size:26px;">12-May-21 01:24:00</span></div><div style="left:102px;top:888px;width:1345px;height:2px;background:#a8a8a8"></div><span class="t" style="right:2294px;top:857px;font-size:26px;">7</span><div style="left:275px;top:850px;width:212px;height:38px;overflow:hidden"><span class="t" style="left:7px;top:7px;font-size:26px;">12-May-21 01:36:00</span></div><div style="left:102px;top:928px;width:1345px;height:2px;background:#a8a8a8"></div><span class="t" style="right:2294px;top:897px;font-size:26px;">8</span><div style="left:275px;top:890px;width:212px;height:38px;overflow:hidden"><span class="t" style="left:7px;top:7px;font-size:26px;">12-May-21 01:49:00</span></div><div style="left:102px;top:968px;width:1345px;height:2px;background:#a8a8a8"></div><span class="t" style="right:2294px;top:937px;font-size:26px;">9</span><div style="left:275px;top:930px;width:212px;height:38px;overflow:hidden"><span class="t" style="left:7px;top:7px;font-size:26px;">12-May-21 02:01:00</span></div><div style="left:273px;top:570px;width:2px;height:402px;background:#a8a8a8"></div><div style="left:493px;top:570px;width:2px;height:402px;background:#a8a8a8"></div><div style="left:491px;top:566px;width:226px;height:46px;border:2px solid #2e2ec8"></div><div style="left:495px;top:570px;width:218px;height:38px;border:2px solid #2e2ec8"></div><div style="left:102px;top:972px;width:1312px;height:31px;background:#f0f0f0"></div><div style="left:133px;top:973px;width:622px;height:29px;background:#cdcdcd"></div><div style="left:1414px;top:972px;width:33px;height:31px;background:#fff"></div><svg style="left:0;top:0" width="2560" height="1440"><path d="M119.0,981 L113.0,987 L119.0,993" fill="none" stroke="#606060" stroke-width="2.6"/><path d="M1394.0,981 L1400.0,987 L1394.0,993" fill="none" stroke="#606060" stroke-width="2.6"/></svg></div></div>
<div style="left:1130px;top:375px;width:1362px;height:586px;background:#b9d1ea;border-left:1px solid #000;border-right:2px solid #000;border-bottom:2px solid #000;clip-path:polygon(8px 0,calc(100% - 8px) 0,calc(100% - 4px) 2px,calc(100% - 2px) 6px,100% 8px,100% 100%,0 100%,0 8px,2px 6px,4px 2px);overflow:hidden"><div style="left:0;top:0;right:0;height:50px;background:linear-gradient(to bottom,#9fb8d6 0px,#aec6e0 3px,#b3cae3 7px,#a3bbd8 9px,#9fb8d6 12px,#9fb8d6 32px,#b0c8e2 100%)"></div><div style="left:0;top:50px;width:1px;bottom:0;background:#000"></div><div style="right:0;top:50px;width:1px;bottom:0;background:#28c8f0"></div><div style="left:0;right:0;height:1px;bottom:0;background:#28c8f0"></div></div><svg style="left:1138px;top:389px" width="33" height="33" viewBox="0 0 33 33"><defs><linearGradient id="ti" x1="0" y1="0" x2="1" y2="1"><stop offset="0" stop-color="#f0f0ff"/><stop offset="1" stop-color="#c0c0f8"/></linearGradient></defs><rect x="0.5" y="0.5" width="31" height="31" fill="url(#ti)" stroke="#333a48" stroke-width="1"/><rect x="5" y="4" width="21" height="4" fill="#fff" stroke="#333a48" stroke-width="1"/><path d="M1,11 H31 M1,15 H31 M1,19 H31 M1,23 H31 M1,27 H31 M4,11 V31 M13,11 V31 M22,11 V31" stroke="#555c70" stroke-width="1"/><rect x="14" y="20" width="7.5" height="3" fill="#f00"/></svg><span class="t" style="left:1176px;top:402px;font-size:22.5px">Table2:waveXY</span><div style="left:2282px;top:383px;width:64px;height:35px;background:linear-gradient(to bottom,#c3d7ec 0%,#bcd1e8 40%,#9ab4d2 45%,#9ab4d2 85%,#b0c8e2 100%);border:1px solid #5a6f8f;border-radius:3px"><svg style="left:0;top:0" width="64" height="35"><rect x="21.0" y="17.0" width="21" height="9" rx="1.5" fill="#e2e2e2" stroke="#3d4a5c" stroke-width="1.1"/></svg></div><div style="left:2350px;top:383px;width:64px;height:35px;background:linear-gradient(to bottom,#c3d7ec 0%,#bcd1e8 40%,#9ab4d2 45%,#9ab4d2 85%,#b0c8e2 100%);border:1px solid #5a6f8f;border-radius:3px"><svg style="left:0;top:0" width="64" height="35"><rect x="21.0" y="8.0" width="21" height="18" rx="1.5" fill="#e2e2e2" stroke="#3d4a5c" stroke-width="1.1"/><rect x="26.5" y="13.0" width="10" height="6" fill="#bccde2" stroke="#3d4a5c" stroke-width="1"/></svg></div><div style="left:2418px;top:383px;width:64px;height:35px;background:linear-gradient(to bottom,#e8a493 0%,#d98a78 40%,#b9432d 45%,#c04a32 85%,#d06a55 100%);border:1px solid #6b1f1f;border-radius:3px"><svg style="left:0;top:0" width="64" height="35"><path d="M21.0,9.0 L28.0,9.0 L32.0,14.0 L36.0,9.0 L43.0,9.0 L35.5,17.5 L43.0,26.0 L36.0,26.0 L32.0,21.0 L28.0,26.0 L21.0,26.0 L28.5,17.5 Z" fill="#e4e4e4" stroke="#3d4a5c" stroke-width="1.3" stroke-linejoin="round"/></svg></div><div style="left:1138px;top:425px;width:1346px;height:528px;overflow:hidden;background:#fff"><div style="left:-1138px;top:-425px;width:2560px;height:1440px"><div style="left:1138px;top:425px;width:1346px;height:528px;background:#fff"></div><span class="t" style="left:1002px;width:600px;text-align:center;top:433.5px;font-size:26px;">R3 C0</span><div style="left:1469px;top:425px;width:2px;height:44px;background:#000"></div><div style="left:1509px;top:425px;width:2px;height:44px;background:#000"></div><div style="left:1549px;top:425px;width:2px;height:44px;background:#000"></div><div style="left:1552px;top:427px;width:777px;height:40px;border:1px solid #a0a0a0;border-right:none"></div><span class="t" style="left:1559px;top:434px;font-size:26px;">1.5911224</span><div style="left:2329px;top:425px;width:3px;height:44px;background:#000"></div><svg style="left:0;top:0" width="2560" height="1440"><path d="M2370.5,444.9 L2374.4,445.1 L2374.4,448.9 L2370.5,449.1 L2368.9,452.9 L2371.5,455.8 L2368.8,458.5 L2365.9,455.9 L2362.1,457.5 L2361.9,461.4 L2358.1,461.4 L2357.9,457.5 L2354.1,455.9 L2351.2,458.5 L2348.5,455.8 L2351.1,452.9 L2349.5,449.1 L2345.6,448.9 L2345.6,445.1 L2349.5,444.9 L2351.1,441.1 L2348.5,438.2 L2351.2,435.5 L2354.1,438.1 L2357.9,436.5 L2358.1,432.6 L2361.9,432.6 L2362.1,436.5 L2365.9,438.1 L2368.8,435.5 L2371.5,438.2 L2368.9,441.1 Z" fill="url(#gear)" stroke="#6a7585" stroke-width="1.1" stroke-linejoin="round"/><circle cx="2360" cy="447" r="7.2" fill="none" stroke="#b8c0cc" stroke-width="1.2"/><circle cx="2360" cy="447" r="3.9" fill="#fff" stroke="#5a6575" stroke-width="1.2"/><path d="M2408,441 Q2412,429 2424,431 Q2430,432 2433,437 L2436,433 L2436,445 L2424,445 L2428,441 Q2421,435 2413,441 Z" fill="#3cb83a" stroke="#1e8a18" stroke-width="0.8"/><path d="M2432,452 Q2428,464 2416,462 Q2410,461 2407,456 L2404,460 L2404,448 L2416,448 L2412,452 Q2419,458 2427,452 Z" fill="#5ccc55" stroke="#1e8a18" stroke-width="0.8"/></svg><div style="left:1138px;top:468px;width:1346px;height:2px;background:#000"></div><span class="t" style="left:924px;width:600px;text-align:center;top:485px;font-size:26px;">Row</span><span class="t" style="left:1120.0px;width:600px;text-align:center;top:485px;font-size:26px;">waveXY[][0]</span><span class="t" style="left:1120.0px;width:600px;text-align:center;top:533px;font-size:26px;">0</span><span class="t" style="left:1340.0px;width:600px;text-align:center;top:485px;font-size:26px;">waveXY[][1]</span><span class="t" style="left:1340.0px;width:600px;text-align:center;top:533px;font-size:26px;">1</span><span class="t" style="left:1560.0px;width:600px;text-align:center;top:485px;font-size:26px;">waveXY[][2]</span><span class="t" style="left:1560.0px;width:600px;text-align:center;top:533px;font-size:26px;">2</span><span class="t" style="left:1780.0px;width:600px;text-align:center;top:485px;font-size:26px;">waveXY[][3]</span><span class="t" style="left:1780.0px;width:600px;text-align:center;top:533px;font-size:26px;">3</span><span class="t" style="left:2000.0px;width:600px;text-align:center;top:485px;font-size:26px;">waveXY[][4]</span><span class="t" style="left:2000.0px;width:600px;text-align:center;top:533px;font-size:26px;">4</span><svg style="left:0;top:0" width="2560" height="1440"><rect x="2450" y="493" width="2" height="2" fill="#f0a040"/></svg><div style="left:1309px;top:470px;width:2px;height:96px;background:#000"></div><div style="left:1529px;top:470px;width:2px;height:452px;background:#a8a8a8"></div><div style="left:1749px;top:470px;width:2px;height:452px;background:#a8a8a8"></div><div style="left:1969px;top:470px;width:2px;height:452px;background:#a8a8a8"></div><div style="left:2189px;top:470px;width:2px;height:452px;background:#a8a8a8"></div><div style="left:2409px;top:470px;width:2px;height:452px;background:#a8a8a8"></div><div style="left:1138px;top:518px;width:1346px;height:2px;background:#000"></div><div style="left:1138px;top:564px;width:1346px;height:2px;background:#000"></div><div style="left:1138px;top:604px;width:1314px;height:2px;background:#a8a8a8"></div><span class="t" style="right:1257px;top:573px;font-size:26px;">0</span><span class="t" style="right:1038px;top:573px;font-size:26px;">0</span><span class="t" style="right:818px;top:573px;font-size:26px;">2.91632</span><span class="t" style="right:598px;top:573px;font-size:26px;">10.9399</span><span class="t" style="right:378px;top:573px;font-size:26px;">19.5234</span><span class="t" style="right:158px;top:573px;font-size:26px;">32.2139</span><div style="left:1138px;top:644px;width:1314px;height:2px;background:#a8a8a8"></div><span class="t" style="right:1257px;top:613px;font-size:26px;">1</span><span class="t" style="right:1038px;top:613px;font-size:26px;">4.77337</span><span class="t" style="right:818px;top:613px;font-size:26px;">4.73939</span><span class="t" style="right:598px;top:613px;font-size:26px;">5.25794</span><span class="t" style="right:378px;top:613px;font-size:26px;">18.5335</span><span class="t" style="right:158px;top:613px;font-size:26px;">23.7413</span><div style="left:1138px;top:684px;width:1314px;height:2px;background:#a8a8a8"></div><span class="t" style="right:1257px;top:653px;font-size:26px;">2</span><span class="t" style="right:1038px;top:653px;font-size:26px;">1.59112</span><span class="t" style="right:818px;top:653px;font-size:26px;">4.37522</span><span class="t" style="right:598px;top:653px;font-size:26px;">9.52901</span><span class="t" style="right:378px;top:653px;font-size:26px;">13.998</span><span class="t" style="right:158px;top:653px;font-size:26px;">25.2334</span><div style="left:1138px;top:724px;width:1314px;height:2px;background:#a8a8a8"></div><span class="t" style="right:1257px;top:693px;font-size:26px;">3</span><span class="t" style="right:1038px;top:693px;font-size:26px;">1.59112</span><span class="t" style="right:818px;top:693px;font-size:26px;">3.28123</span><span class="t" style="right:598px;top:693px;font-size:26px;">9.12273</span><span class="t" style="right:378px;top:693px;font-size:26px;">16.5096</span><span class="t" style="right:158px;top:693px;font-size:26px;">25.2556</span><div style="left:1138px;top:764px;width:1314px;height:2px;background:#a8a8a8"></div><span class="t" style="right:1257px;top:733px;font-size:26px;">4</span><span class="t" style="right:1038px;top:733px;font-size:26px;">1.59112</span><span class="t" style="right:818px;top:733px;font-size:26px;">2.18798</span><span class="t" style="right:598px;top:733px;font-size:26px;">8.51701</span><span class="t" style="right:378px;top:733px;font-size:26px;">16.5096</span><span class="t" style="right:158px;top:733px;font-size:26px;">24.805</span><div style="left:1138px;top:804px;width:1314px;height:2px;background:#a8a8a8"></div><span class="t" style="right:1257px;top:773px;font-size:26px;">5</span><span class="t" style="right:1038px;top:773px;font-size:26px;">1.59112</span><span class="t" style="right:818px;top:773px;font-size:26px;">1.4589</span><span class="t" style="right:598px;top:773px;font-size:26px;">5.06145</span><span class="t" style="right:378px;top:773px;font-size:26px;">13.3775</span><span class="t" style="right:158px;top:773px;font-size:26px;">19.5677</span><div style="left:1138px;top:844px;width:1314px;height:2px;background:#a8a8a8"></div><span class="t" style="right:1257px;top:813px;font-size:26px;">6</span><span class="t" style="right:1038px;top:813px;font-size:26px;">0.795561</span><span class="t" style="right:818px;top:813px;font-size:26px;">2.91706</span><span class="t" style="right:598px;top:813px;font-size:26px;">3.84854</span><span class="t" style="right:378px;top:813px;font-size:26px;">8.50224</span><span class="t" style="right:158px;top:813px;font-size:26px;">13.0082</span><div style="left:1138px;top:884px;width:1314px;height:2px;background:#a8a8a8"></div><span class="t" style="right:1257px;top:853px;font-size:26px;">7</span><span class="t" style="right:1038px;top:853px;font-size:26px;">1.59112</span><span class="t" style="right:818px;top:853px;font-size:26px;">0.729301</span><span class="t" style="right:598px;top:853px;font-size:26px;">4.05241</span><span class="t" style="right:378px;top:853px;font-size:26px;">7.6823</span><span class="t" style="right:158px;top:853px;font-size:26px;">10.2308</span><div style="left:1138px;top:924px;width:1314px;height:2px;background:#a8a8a8"></div><span class="t" style="right:1257px;top:893px;font-size:26px;">8</span><span class="t" style="right:1038px;top:893px;font-size:26px;">0</span><span class="t" style="right:818px;top:893px;font-size:26px;">0.729301</span><span class="t" style="right:598px;top:893px;font-size:26px;">1.82011</span><span class="t" style="right:378px;top:893px;font-size:26px;">4.97724</span><span class="t" style="right:158px;top:893px;font-size:26px;">8.73123</span><div style="left:1309px;top:566px;width:2px;height:356px;background:#a8a8a8"></div><div style="left:1307px;top:682px;width:226px;height:46px;border:2px solid #2e2ec8"></div><div style="left:1311px;top:686px;width:218px;height:38px;border:2px solid #2e2ec8"></div><div style="left:2452px;top:566px;width:32px;height:356px;background:#f0f0f0"></div><div style="left:2453px;top:600px;width:30px;height:34px;background:#cdcdcd"></div><div style="left:2452px;top:922px;width:32px;height:31px;background:#fff"></div><div style="left:1138px;top:922px;width:1314px;height:31px;background:#f0f0f0"></div><div style="left:1168px;top:923px;width:208px;height:29px;background:#cdcdcd"></div><svg style="left:0;top:0" width="2560" height="1440"><path d="M2462,588.0 L2468,582.0 L2474,588.0" fill="none" stroke="#606060" stroke-width="2.6"/><path d="M2462,902.0 L2468,908.0 L2474,902.0" fill="none" stroke="#606060" stroke-width="2.6"/><path d="M1155.0,931 L1149.0,937 L1155.0,943" fill="none" stroke="#606060" stroke-width="2.6"/><path d="M2429.0,931 L2435.0,937 L2429.0,943" fill="none" stroke="#606060" stroke-width="2.6"/></svg></div></div>
<div style="left:96px;top:1360px;width:688px;height:80px;background:#f2f2f2;border:2px solid #c4c4c4;border-bottom:2px solid #c4c4c4"></div><div style="left:1378px;top:1360px;width:96px;height:80px;background:linear-gradient(to bottom,#3c3c3c,#4c4c4c)"></div><div style="left:1378px;top:1436px;width:96px;height:4px;background:#76b9ed"></div><div style="left:1680px;top:1436px;width:80px;height:4px;background:#76b9ed"></div><svg style="left:0;top:0" width="2560" height="1440"><defs><linearGradient id="mailg" x1="0" y1="0" x2="1" y2="1"><stop offset="0" stop-color="#1e90e0"/><stop offset="1" stop-color="#3cc8f4"/></linearGradient><linearGradient id="prism" x1="0" y1="0" x2="1" y2="1"><stop offset="0" stop-color="#30d0f0"/><stop offset="0.5" stop-color="#2090f0"/><stop offset="0.75" stop-color="#f050a0"/><stop offset="1" stop-color="#f0a030"/></linearGradient><linearGradient id="sticky" x1="0" y1="0" x2="1" y2="1"><stop offset="0" stop-color="#ffe000"/><stop offset="1" stop-color="#f5c000"/></linearGradient><radialGradient id="cloud" cx="0.4" cy="0.3" r="0.8"><stop offset="0" stop-color="#dce8f8"/><stop offset="1" stop-color="#a8c0e0"/></radialGradient></defs><path d="M32,1388 L45,1386.2 L45,1398.5 L32,1398.5 Z M46.5,1386 L64,1383.6 L64,1398.5 L46.5,1398.5 Z M32,1400 L45,1400 L45,1412.3 L32,1410.5 Z M46.5,1400 L64,1400 L64,1415 L46.5,1412.5 Z" fill="#fff"/><circle cx="141" cy="1395" r="10" fill="none" stroke="#000" stroke-width="1.8"/><path d="M133.5,1402.5 L120.5,1415.5" stroke="#000" stroke-width="2"/><circle cx="649" cy="1386" r="7" fill="#f5c820"/><g stroke="#e8b020" stroke-width="1.5"><path d="M649,1372 V1378 M649,1394 V1400 M635,1386 H641 M657,1386 H663 M639,1376 L643,1380 M655,1392 L659,1396 M659,1376 L655,1380 M643,1392 L639,1396"/></g><path d="M704.5,1369 Q706,1376 712,1377 Q706,1378 704.5,1385 Q703,1378 697,1377 Q703,1376 704.5,1369 Z" fill="#e070f0"/><circle cx="682" cy="1390" r="4" fill="#60d0e8"/><circle cx="768" cy="1424" r="4" fill="#30c060"/><path d="M636,1424 L640,1414 L680,1410 L690,1403 L700,1410 L708,1410 L709,1395 L721,1395 L721,1424 Z" fill="#e03838"/><rect x="708" y1="1395" y="1395" width="13" height="5" fill="#d8d8e0"/><rect x="683" y="1414" width="20" height="8" fill="#f0c040"/><circle cx="655" cy="1418" r="10" fill="#3a2a50"/><circle cx="655" cy="1418" r="3.5" fill="#d8d0f0"/><circle cx="710" cy="1418" r="10" fill="#3a2a50"/><circle cx="710" cy="1418" r="3.5" fill="#d8d0f0"/><path d="M743,1368 L752,1428 M757,1375 L741,1428" stroke="#e0a020" stroke-width="2.5"/><path d="M743,1368 L752,1428" stroke="#f05020" stroke-width="2.5"/><path d="M724,1378 Q733,1372 744,1373 L747,1390 Q738,1388 727,1395 Z" fill="#3a3a7a"/><path d="M750,1383 Q760,1382 777,1393 L772,1410 Q762,1400 750,1398 Z" fill="#3a3a7a"/><g fill="#e8e8f0"><rect x="730" y="1378" width="4" height="4"/><rect x="738" y="1383" width="4" height="4"/><rect x="756" y="1387" width="4" height="4"/><rect x="764" y="1394" width="4" height="4"/><rect x="730" y="1387" width="4" height="4"/></g><circle cx="743" cy="1368" r="3" fill="#f06030"/><circle cx="757" cy="1374" r="3" fill="#f0b020"/><rect x="814" y="1376" width="48" height="48" fill="#22aad8"/><path d="M830.5,1384 L824.7,1415.6 L851,1412.5 L830.5,1412 Z" fill="#0a2a70"/><path d="M830.4,1383 H836.8 V1406 H851 V1412 H830.4 Z" fill="#fff"/><path d="M915,1386 Q915,1382 918,1382 L930,1382 L934,1386 L955,1386 Q957,1386 957,1389 L957,1416 L915,1416 Z" fill="#f5c540"/><rect x="915" y="1389" width="42" height="27" rx="1.5" fill="#fcd86a"/><path d="M922,1416 L922,1403 Q922,1400 925,1400 L947,1400 Q950,1400 950,1403 L950,1416 L943,1416 L943,1407 L929,1407 L929,1416 Z" fill="#3a90e0"/><path d="M1010,1390 L1034,1376 L1058,1390 L1058,1421 L1010,1421 Z" fill="#1060c0"/><path d="M1014,1391 L1054,1391 L1034,1404 Z" fill="#f0f0f0"/><path d="M1010,1391 L1034,1406 L1058,1391 L1058,1421 L1010,1421 Z" fill="url(#mailg)"/><rect x="1119" y="1379" width="36" height="42" rx="2" fill="#2b7cd3"/><rect x="1119" y="1379" width="36" height="10" rx="2" fill="#41a5ee"/><rect x="1119" y="1400" width="36" height="10" fill="#185abd"/><rect x="1119" y="1410" width="36" height="11" rx="2" fill="#103f91"/><rect x="1108" y="1388" width="24" height="24" rx="2" fill="#185abd"/><text x="1120" y="1407" font-size="17" font-weight="bold" fill="#fff" text-anchor="middle" font-family="Liberation Sans">W</text><circle cx="1234" cy="1400" r="21" fill="#d35230"/><path d="M1234,1379 A21,21 0 0 1 1255,1400 L1234,1400 Z" fill="#ff8f6b"/><path d="M1234,1379 A21,21 0 0 0 1213,1400 L1234,1400 Z" fill="#ed6c47"/><rect x="1206" y="1388" width="24" height="24" rx="2" fill="#c43e1c"/><text x="1218" y="1407" font-size="17" font-weight="bold" fill="#fff" text-anchor="middle" font-family="Liberation Sans">P</text><rect x="1315" y="1379" width="36" height="42" rx="2" fill="#107c41"/><rect x="1333" y="1379" width="18" height="10" fill="#33c481"/><rect x="1315" y="1379" width="18" height="10" fill="#21a366"/><rect x="1315" y="1410" width="36" height="11" fill="#185c37"/><rect x="1304" y="1388" width="24" height="24" rx="2" fill="#107c41"/><text x="1316" y="1407" font-size="17" font-weight="bold" fill="#fff" text-anchor="middle" font-family="Liberation Sans">X</text><g transform="translate(1426,1399) scale(1.0) rotate(-10)"><rect x="-16" y="-18" width="34" height="34" fill="#f2e27a" stroke="#c8b858" stroke-width="0.6" transform="rotate(-6)"/><rect x="-18" y="-16" width="35" height="34" fill="#dcdcfa" stroke="#9090b8" stroke-width="0.7"/><path d="M-13,-10 V12 H13" fill="none" stroke="#707080" stroke-width="0.8"/><path d="M-12,6 L-9,0 L-7,5 L-5,-4 L-3,8 L-1,-12 L1,6 L3,-3 L5,4 L7,-1 L9,3 L11,0 L13,2" fill="none" stroke="#e82020" stroke-width="1.4" stroke-linejoin="round"/><text x="5" y="-5" font-size="13" fill="#9a9ab0" font-family="Liberation Sans">8</text><path d="M-8,15 H8" stroke="#8080a0" stroke-width="1"/></g><path d="M1500,1414 L1516,1386 L1532,1386 L1548,1414 Z" fill="url(#prism)"/><rect x="1601" y="1379" width="42" height="42" rx="2" fill="url(#sticky)"/><path d="M1622,1421 L1622,1406 Q1622,1400 1628,1400 L1643,1400 L1643,1419 Q1643,1421 1641,1421 Z" fill="#e0a800"/><path d="M1622,1421 L1622,1406 Q1622,1400 1628,1400 L1643,1400 Z" fill="#3a3a3a"/><circle cx="1720" cy="1400" r="22" fill="#2a9d48"/><path d="M1720,1400 L1700.9,1389 A22,22 0 0 1 1739.1,1389 Z" fill="#e33b2e"/><path d="M1720,1400 L1739.1,1389 A22,22 0 0 1 1720,1422 Z" fill="#f5c020"/><circle cx="1720" cy="1400" r="10" fill="#fff"/><circle cx="1720" cy="1400" r="8" fill="#3a7ff0"/><rect x="1887.5" y="1381.5" width="95" height="37" fill="#1f9d4d" stroke="#fff" stroke-width="3"/><rect x="1984" y="1392" width="4" height="16" fill="#fff"/><path d="M2004,1389 V1396 M2012,1389 V1396" stroke="#fff" stroke-width="2.5"/><path d="M2000,1396 H2016 V1402 Q2016,1407 2010,1408 V1415 H2006 V1408 Q2000,1407 2000,1402 Z" fill="#fff"/><path d="M2082,1410 Q2076,1410 2076,1403 Q2076,1396 2084,1396 Q2086,1384 2098,1384 Q2108,1384 2111,1393 Q2121,1394 2121,1402 Q2121,1410 2112,1410 Z" fill="url(#cloud)"/><circle cx="2115" cy="1417" r="6" fill="#e81123"/><path d="M2232,1407 L2244,1395 L2256,1407" fill="none" stroke="#fff" stroke-width="2"/><rect x="2282" y="1392" width="24" height="14" fill="none" stroke="#fff" stroke-width="2"/><rect x="2306" y="1396" width="2.5" height="6" fill="#fff"/><rect x="2289" y="1394" width="16" height="10" fill="#fff"/><path d="M2276,1390 V1396 Q2276,1400 2281,1400 Q2286,1400 2286,1396 V1390 Z" fill="none" stroke="#fff" stroke-width="1.8"/><path d="M2281,1400 V1408" stroke="#fff" stroke-width="1.8"/><path d="M2479,1385 H2510 V1410 H2496 L2489,1416 V1410 H2479 Z" fill="none" stroke="#fff" stroke-width="1.8"/><path d="M2510,1403 A5,5 0 1 1 2503,1412" fill="none" stroke="#fff" stroke-width="1.8"/><rect x="2549" y="1360" width="2" height="80" fill="#5a5a5a"/></svg><span class="t" style="left:177px;top:1388.5px;font-size:29px;color:#222">Type here to search</span><span class="t" style="left:1838px;top:1369px;font-size:20.5px;color:#fff;">EN</span><span class="t" style="left:1904px;top:1388px;font-size:25.4px;color:#fff;">100%</span><span class="t" style="left:2138px;top:1390px;font-size:26px;color:#fff;">30°C</span><span class="t" style="left:2343px;top:1372px;font-size:22.6px;color:#fff;">5:57 PM</span><span class="t" style="left:2334px;top:1408.5px;font-size:23.7px;color:#fff;">03-Jul-22</span>
</body></html>
